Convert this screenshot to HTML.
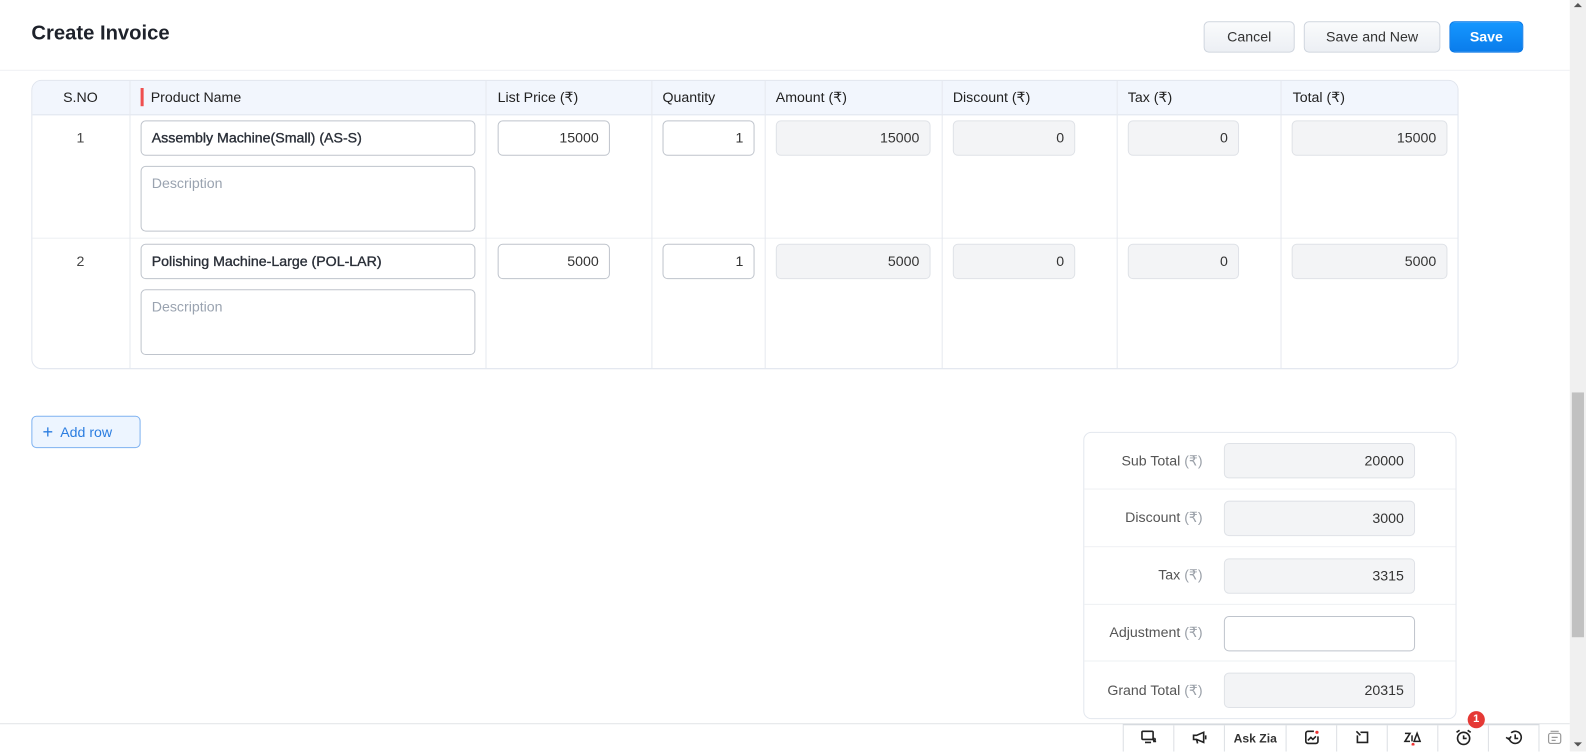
<!DOCTYPE html>
<html><head><meta charset="utf-8"><style>
*{box-sizing:border-box;margin:0;padding:0}
html,body{width:1586px;height:751px;overflow:hidden;background:#fff;font-family:"Liberation Sans",sans-serif;color:#222}
#w{position:absolute;left:0;top:0;width:1568px;height:743px;transform:scale(1.01148);transform-origin:0 0}
.a{position:absolute}
.btn{position:absolute;top:21px;height:31px;border:1px solid #cfd5de;border-radius:5px;background:linear-gradient(#fafbfc,#eceff4);font-size:14px;color:#333;text-align:center;line-height:29px}
.inp{position:absolute;height:35px;border:1px solid #bfc4cc;border-radius:5px;background:#fff;font-size:14px;line-height:33px;padding:0 10px;text-align:right;color:#333}
.ro{background:#f3f4f6;border-color:#dfe2e7}
.ta{position:absolute;height:65px;border:1px solid #bfc4cc;border-radius:5px;font-size:14px;color:#9aa3b0;padding:8px 10px}
.th{position:absolute;top:88px;font-size:14px;color:#222}
.vl{position:absolute;width:1px;background:#e6e9ef;top:80px;height:284px}
.lbl{position:absolute;left:1072px;width:117px;text-align:right;font-size:14px;color:#555}
.lbl span{color:#9aa0a8}
.cell{position:absolute;top:717px;height:26px;border-left:1px solid #dcdfe4;text-align:center;font-size:12px;font-weight:bold;line-height:26px;color:#333}
.pn{text-align:left;color:#2a2f38;-webkit-text-stroke:0.35px #2a2f38}
</style></head><body><div id="w">
<div class="a" style="left:31px;top:22px;font-size:20px;font-weight:bold;color:#1e222b">Create Invoice</div>
<div class="btn" style="left:1190px;width:90px">Cancel</div>
<div class="btn" style="left:1289px;width:135px">Save and New</div>
<div class="btn" style="left:1433px;width:73px;background:linear-gradient(#1597ff,#0a7ceb);border-color:#0a78e6;color:#fff;font-weight:bold">Save</div>
<div class="a" style="left:0;top:69px;width:1552px;height:1px;background:#eef0f3"></div>

<div class="a" style="left:31px;top:79px;width:1411px;height:286px;border:1px solid #e0e5ee;border-radius:10px;overflow:hidden">
<div class="a" style="left:0;top:0;width:100%;height:34px;background:#f2f6fd;border-bottom:1px solid #e0e5ee"></div>
<div class="a" style="left:0;top:155px;width:100%;height:1px;background:#eceff3"></div>
</div>
<div class="vl" style="left:128px"></div><div class="vl" style="left:480px"></div><div class="vl" style="left:644px"></div><div class="vl" style="left:756px"></div><div class="vl" style="left:931px"></div><div class="vl" style="left:1104px"></div><div class="vl" style="left:1266px"></div>
<div class="th" style="left:31px;width:97px;text-align:center">S.NO</div>
<div class="a" style="left:139px;top:87px;width:3px;height:18px;background:#ef4f4f"></div>
<div class="th" style="left:149px">Product Name</div>
<div class="th" style="left:492px">List Price (₹)</div>
<div class="th" style="left:655px">Quantity</div>
<div class="th" style="left:767px">Amount (₹)</div>
<div class="th" style="left:942px">Discount (₹)</div>
<div class="th" style="left:1115px">Tax (₹)</div>
<div class="th" style="left:1278px">Total (₹)</div>

<div class="a" style="left:31px;top:128px;width:97px;text-align:center;font-size:14px;color:#444">1</div>
<div class="inp pn" style="left:139px;top:119px;width:331px">Assembly Machine(Small) (AS-S)</div>
<div class="ta" style="left:139px;top:164px;width:331px">Description</div>
<div class="inp" style="left:492px;top:119px;width:111px">15000</div>
<div class="inp" style="left:655px;top:119px;width:91px">1</div>
<div class="inp ro" style="left:767px;top:119px;width:153px">15000</div>
<div class="inp ro" style="left:942px;top:119px;width:121px">0</div>
<div class="inp ro" style="left:1115px;top:119px;width:110px">0</div>
<div class="inp ro" style="left:1277px;top:119px;width:154px">15000</div>

<div class="a" style="left:31px;top:250px;width:97px;text-align:center;font-size:14px;color:#444">2</div>
<div class="inp pn" style="left:139px;top:241px;width:331px">Polishing Machine-Large (POL-LAR)</div>
<div class="ta" style="left:139px;top:286px;width:331px">Description</div>
<div class="inp" style="left:492px;top:241px;width:111px">5000</div>
<div class="inp" style="left:655px;top:241px;width:91px">1</div>
<div class="inp ro" style="left:767px;top:241px;width:153px">5000</div>
<div class="inp ro" style="left:942px;top:241px;width:121px">0</div>
<div class="inp ro" style="left:1115px;top:241px;width:110px">0</div>
<div class="inp ro" style="left:1277px;top:241px;width:154px">5000</div>

<div class="a" style="left:31px;top:411px;width:108px;height:32px;border:1px solid #7fb2f0;border-radius:5px;background:#edf5ff;color:#2b7de0;font-size:14px;line-height:30px;padding-left:10px"><span style="font-size:18px;vertical-align:-1px">+</span>&nbsp; Add row</div>

<div class="a" style="left:1071px;top:427px;width:369px;height:284px;border:1px solid #e3e7ee;border-radius:8px"></div>
<div class="a" style="left:1072px;top:483px;width:367px;height:1px;background:#eef0f3"></div>
<div class="a" style="left:1072px;top:540px;width:367px;height:1px;background:#eef0f3"></div>
<div class="a" style="left:1072px;top:597px;width:367px;height:1px;background:#eef0f3"></div>
<div class="a" style="left:1072px;top:653px;width:367px;height:1px;background:#eef0f3"></div>
<div class="lbl" style="top:447px">Sub Total <span>(₹)</span></div>
<div class="inp ro" style="left:1210px;top:438px;width:189px">20000</div>
<div class="lbl" style="top:503px">Discount <span>(₹)</span></div>
<div class="inp ro" style="left:1210px;top:495px;width:189px">3000</div>
<div class="lbl" style="top:560px">Tax <span>(₹)</span></div>
<div class="inp ro" style="left:1210px;top:552px;width:189px">3315</div>
<div class="lbl" style="top:617px">Adjustment <span>(₹)</span></div>
<div class="inp" style="left:1210px;top:609px;width:189px"></div>
<div class="lbl" style="top:674px">Grand Total <span>(₹)</span></div>
<div class="inp ro" style="left:1210px;top:665px;width:189px">20315</div>

<div class="a" style="left:0;top:715px;width:1552px;height:28px;border-top:1px solid #e2e4e8;background:#fff"></div>
<div class="a" style="left:1110px;top:716px;width:412px;height:1px;background:#cfd3d9"></div>
<div class="cell" style="left:1110px;width:50px">
<svg width="16" height="14" viewBox="0 0 16 14" style="vertical-align:-2px" fill="none" stroke="#222" stroke-width="1.6"><rect x="1" y="1" width="11" height="8" rx="1"/><path d="M4 12h6M12 11h3M13 8a1 1 0 1 0 0.1 0"/></svg></div>
<div class="cell" style="left:1160px;width:50px">
<svg width="16" height="14" viewBox="0 0 16 14" style="vertical-align:-2px" fill="none" stroke="#222" stroke-width="1.6"><path d="M2 5h3l7-3v10l-7-3H2zM5 9l1 4M14 5v4"/></svg></div>
<div class="cell" style="left:1210px;width:61px">Ask Zia</div>
<div class="cell" style="left:1271px;width:50px">
<svg width="16" height="16" viewBox="0 0 16 16" style="vertical-align:-3px" fill="none" stroke="#222" stroke-width="1.6"><path d="M10 2H4a2 2 0 0 0-2 2v8a2 2 0 0 0 2 2h8a2 2 0 0 0 2-2V7M4 11l3-3 2 2 3-3"/><circle cx="13" cy="3" r="1.6" fill="#e33" stroke="none"/></svg></div>
<div class="cell" style="left:1321px;width:50px">
<svg width="16" height="16" viewBox="0 0 16 16" style="vertical-align:-3px" fill="none" stroke="#222" stroke-width="1.6"><path d="M6 3h7v10H3V6M2 2l4 4"/></svg></div>
<div class="cell" style="left:1371px;width:50px">
<svg width="20" height="16" viewBox="0 0 20 16" style="vertical-align:-3px" fill="none" stroke="#222" stroke-width="1.5"><path d="M2 4h5L2 12h5M9 6v6M14 4l-3 8h6z"/><circle cx="10" cy="15" r="1.5" fill="#e33" stroke="none"/></svg></div>
<div class="cell" style="left:1421px;width:50px">
<svg width="18" height="18" viewBox="0 0 18 18" style="vertical-align:-4px" fill="none" stroke="#222" stroke-width="1.6"><circle cx="9" cy="10" r="6"/><path d="M9 7v3h3M2 4l3-2M16 4l-3-2"/></svg></div>
<div class="cell" style="left:1471px;width:50px">
<svg width="18" height="16" viewBox="0 0 18 16" style="vertical-align:-3px" fill="none" stroke="#222" stroke-width="1.6"><path d="M4 8a6 6 0 1 0 2-4.5M1 8l3 2 2-3M10 5v4h3"/></svg></div>
<div class="cell" style="left:1521px;width:31px;border-left:1px solid #dcdfe4">
<svg width="14" height="14" viewBox="0 0 14 14" style="vertical-align:-2px" fill="none" stroke="#999" stroke-width="1.2"><rect x="1" y="3" width="12" height="10" rx="2"/><path d="M3 1h8M4 7h6M4 10h4"/></svg></div>
<div class="a" style="left:1451px;top:703px;width:17px;height:17px;border-radius:50%;background:#e53935;color:#fff;font-size:11px;font-weight:bold;text-align:center;line-height:17px">1</div>

<div class="a" style="left:1552px;top:0;width:16px;height:743px;background:#f0f0f0"></div>
<div class="a" style="left:1554px;top:388px;width:12px;height:242px;background:#c1c1c1"></div>
<div class="a" style="left:1556px;top:3px;width:0;height:0;border-left:4px solid transparent;border-right:4px solid transparent;border-bottom:4px solid #555"></div>
<div class="a" style="left:1556px;top:734px;width:0;height:0;border-left:4px solid transparent;border-right:4px solid transparent;border-top:4px solid #555"></div>
</div></body></html>
